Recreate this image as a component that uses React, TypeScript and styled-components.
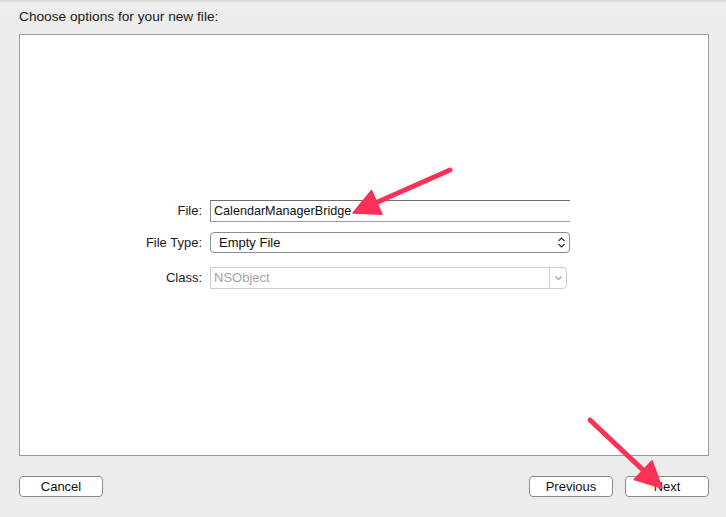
import styled, { createGlobalStyle } from "styled-components";

const GlobalStyle = createGlobalStyle`
  html, body {
    margin: 0;
    padding: 0;
    background: #ececec;
  }
  * {
    box-sizing: border-box;
  }
`;

const Sheet = styled.div`
  position: relative;
  width: 726px;
  height: 517px;
  display: flex;
  flex-direction: column;
  padding: 0 17px 0 19px;
  background: linear-gradient(#d6d6d6 0px, #e6e6e6 2px, #efefef 4px, #ececec 12px);
  font-family: "Liberation Sans", Arial, sans-serif;
  font-size: 13px;
  color: #1a1a1a;
  overflow: hidden;
`;

const Title = styled.div`
  margin-top: 9px;
  height: 16px;
  line-height: 16px;
  font-size: 13.7px;
`;

const Panel = styled.div`
  margin-top: 9px;
  height: 422px;
  width: 690px;
  background: #fff;
  border: 1px solid #9b9b9b;
  display: flex;
  align-items: center;
`;

const Form = styled.div`
  display: grid;
  grid-template-columns: 182px 360px;
  column-gap: 8px;
  align-items: center;
  margin-top: -2px;
`;

const Label = styled.div<{ $mt?: number }>`
  text-align: right;
  margin-top: ${(p) => p.$mt ?? 0}px;
  color: #222;
`;

const TextField = styled.div<{ $mt?: number }>`
  height: 22px;
  margin-top: ${(p) => p.$mt ?? 0}px;
  border-top: 1px solid #6f6f6f;
  border-left: 1px solid #8a8a8a;
  border-bottom: 1px solid #9c9c9c;
  padding-left: 3px;
  line-height: 20px;
  font-size: 12.6px;
  color: #111;
  background: #fff;
`;

const PopUp = styled.div<{ $mt?: number }>`
  height: 21px;
  margin-top: ${(p) => p.$mt ?? 0}px;
  border: 1px solid #8c8c8c;
  border-radius: 4px;
  display: flex;
  align-items: center;
  justify-content: space-between;
  padding: 0 3px 0 8px;
  color: #111;
  background: #fff;
`;

const Combo = styled.div<{ $mt?: number }>`
  width: 357px;
  height: 22px;
  margin-top: ${(p) => p.$mt ?? 0}px;
  border: 1px solid #cdcdcd;
  border-radius: 0 4px 4px 0;
  display: flex;
  align-items: stretch;
  color: #a3a3a3;
  background: #fff;
`;

const ComboText = styled.div`
  flex: 1;
  padding-left: 3px;
  line-height: 20px;
  border-right: 1px solid #d4d4d4;
`;

const ComboArrow = styled.div`
  width: 16px;
  display: flex;
  align-items: center;
  justify-content: center;
`;

const Footer = styled.div`
  margin-top: 20px;
  display: flex;
  align-items: center;
  gap: 12px;
`;

const Spacer = styled.div`
  flex: 1;
`;

const Button = styled.button`
  width: 84px;
  height: 21px;
  padding: 0;
  border: 1px solid #8a8a8a;
  border-radius: 4px;
  background: #fff;
  font-family: "Liberation Sans", Arial, sans-serif;
  font-size: 13px;
  color: #111;
  line-height: 19px;
`;

const Overlay = styled.svg`
  position: absolute;
  left: 0;
  top: 0;
  pointer-events: none;
`;

function Arrow({ x1, y1, x2, y2 }: { x1: number; y1: number; x2: number; y2: number }) {
  const dx = x2 - x1;
  const dy = y2 - y1;
  const len = Math.hypot(dx, dy);
  const ux = dx / len;
  const uy = dy / len;
  const headLen = 26;
  const headW = 13;
  const bx = x2 - ux * headLen;
  const by = y2 - uy * headLen;
  const px = -uy;
  const py = ux;
  const pts = `${x2},${y2} ${bx + px * headW},${by + py * headW} ${bx - px * headW},${by - py * headW}`;
  return (
    <g>
      <line
        x1={x1}
        y1={y1}
        x2={bx + ux * 4}
        y2={by + uy * 4}
        stroke="#fc3158"
        strokeWidth={5}
        strokeLinecap="round"
      />
      <polygon points={pts} fill="#fc3158" stroke="#fc3158" strokeWidth={1.5} strokeLinejoin="round" />
    </g>
  );
}

export default function App() {
  return (
    <>
      <GlobalStyle />
      <Sheet>
        <Title>Choose options for your new file:</Title>
        <Panel>
          <Form>
            <Label>File:</Label>
            <TextField>CalendarManagerBridge</TextField>
            <Label $mt={10}>File Type:</Label>
            <PopUp $mt={10}>
              <span>Empty File</span>
              <svg width="9" height="13" viewBox="0 0 9 13">
                <path d="M1.5 5 L4.5 2 L7.5 5 M1.5 8 L4.5 11 L7.5 8" fill="none" stroke="#333" strokeWidth="1.2" />
              </svg>
            </PopUp>
            <Label $mt={14}>Class:</Label>
            <Combo $mt={14}>
              <ComboText>NSObject</ComboText>
              <ComboArrow>
                <svg width="9" height="6" viewBox="0 0 9 6">
                  <path d="M1.5 1.5 L4.5 4.5 L7.5 1.5" fill="none" stroke="#9a9a9a" strokeWidth="1.1" />
                </svg>
              </ComboArrow>
            </Combo>
          </Form>
        </Panel>
        <Footer>
          <Button>Cancel</Button>
          <Spacer />
          <Button>Previous</Button>
          <Button>Next</Button>
        </Footer>
        <Overlay width="726" height="517" viewBox="0 0 726 517">
          <Arrow x1={450} y1={170} x2={353} y2={213} />
          <Arrow x1={590} y1={420} x2={662} y2={488} />
        </Overlay>
      </Sheet>
    </>
  );
}
